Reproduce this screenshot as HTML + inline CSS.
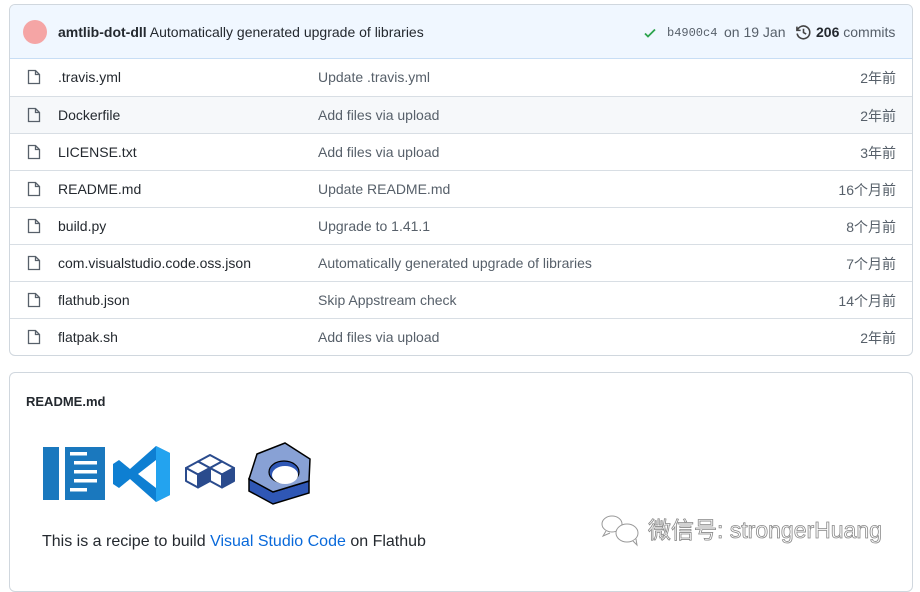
<!DOCTYPE html>
<html><head><meta charset="utf-8"><style>
*{box-sizing:border-box;margin:0;padding:0}
body{width:920px;height:572px;overflow:hidden;background:#fff;font-family:"Liberation Sans","Noto Sans CJK SC",sans-serif;font-size:14px;color:#24292f;position:relative}
span,div{line-height:17px}
.box{position:absolute;left:9px;top:4px;width:904px;border:1px solid #d0d7de;border-radius:6px;overflow:hidden}
.hd{height:54px;background:#f0f7ff;border-bottom:1px solid #c8def5;position:relative}
.av{position:absolute;left:13px;top:15px;width:24px;height:24px;border-radius:50%;background:#f5a5a5}
.hd .msg{position:absolute;left:48px;top:19px}
.row{height:37px;border-top:1px solid #d8dee4;position:relative;color:#24292f}
.hd + .row{border-top:none}
.row.g{background:#f6f8fa}
.row svg{position:absolute;left:17px;top:10px}
.row .n{position:absolute;left:48px;top:10px}
.row .c{position:absolute;left:308px;top:10px;color:#57606a}
.row .t{position:absolute;right:16px;top:11px;color:#57606a;line-height:17px}
.rd{position:absolute;left:9px;top:372px;width:904px;height:220px;border:1px solid #d0d7de;border-radius:6px}
</style></head><body>
<div class="box">
<div class="hd"><div class="av"></div>
<div class="msg"><b>amtlib-dot-dll</b> Automatically generated upgrade of libraries</div>
<svg style="position:absolute;left:633px;top:21px" width="14" height="14" viewBox="0 0 14 14"><path d="M2 7.5l3 3 7-7" fill="none" stroke="#2da44e" stroke-width="1.8"/></svg>
<span style="position:absolute;left:657px;top:20px;font-family:'Liberation Mono',monospace;font-size:12px;color:#57606a">b4900c4</span>
<span style="position:absolute;left:714px;top:19px;color:#57606a">on 19 Jan</span>
<svg style="position:absolute;left:785px;top:19px" width="17" height="17" viewBox="0 0 16 16"><path d="M1.8 2.5v3.5h3.5M2.2 6A6 6 0 1 1 2 9" fill="none" stroke="#444" stroke-width="1.5"/><path d="M8 4.5V8l2.5 1.5" fill="none" stroke="#444" stroke-width="1.5"/></svg>
<span style="position:absolute;left:806px;top:19px;color:#57606a"><b style="color:#24292f">206</b> commits</span>
</div>
<div class="row"><svg width="14" height="16" viewBox="0 0 14 16"><path d="M1.5 1.5h7l4 4v9h-11z M8.5 1.5v4h4" fill="none" stroke="#57606a" stroke-width="1.3"/></svg><span class="n">.travis.yml</span><span class="c">Update .travis.yml</span><span class="t">2年前</span></div>
<div class="row g"><svg width="14" height="16" viewBox="0 0 14 16"><path d="M1.5 1.5h7l4 4v9h-11z M8.5 1.5v4h4" fill="none" stroke="#57606a" stroke-width="1.3"/></svg><span class="n">Dockerfile</span><span class="c">Add files via upload</span><span class="t">2年前</span></div>
<div class="row"><svg width="14" height="16" viewBox="0 0 14 16"><path d="M1.5 1.5h7l4 4v9h-11z M8.5 1.5v4h4" fill="none" stroke="#57606a" stroke-width="1.3"/></svg><span class="n">LICENSE.txt</span><span class="c">Add files via upload</span><span class="t">3年前</span></div>
<div class="row"><svg width="14" height="16" viewBox="0 0 14 16"><path d="M1.5 1.5h7l4 4v9h-11z M8.5 1.5v4h4" fill="none" stroke="#57606a" stroke-width="1.3"/></svg><span class="n">README.md</span><span class="c">Update README.md</span><span class="t">16个月前</span></div>
<div class="row"><svg width="14" height="16" viewBox="0 0 14 16"><path d="M1.5 1.5h7l4 4v9h-11z M8.5 1.5v4h4" fill="none" stroke="#57606a" stroke-width="1.3"/></svg><span class="n">build.py</span><span class="c">Upgrade to 1.41.1</span><span class="t">8个月前</span></div>
<div class="row"><svg width="14" height="16" viewBox="0 0 14 16"><path d="M1.5 1.5h7l4 4v9h-11z M8.5 1.5v4h4" fill="none" stroke="#57606a" stroke-width="1.3"/></svg><span class="n">com.visualstudio.code.oss.json</span><span class="c">Automatically generated upgrade of libraries</span><span class="t">7个月前</span></div>
<div class="row"><svg width="14" height="16" viewBox="0 0 14 16"><path d="M1.5 1.5h7l4 4v9h-11z M8.5 1.5v4h4" fill="none" stroke="#57606a" stroke-width="1.3"/></svg><span class="n">flathub.json</span><span class="c">Skip Appstream check</span><span class="t">14个月前</span></div>
<div class="row"><svg width="14" height="16" viewBox="0 0 14 16"><path d="M1.5 1.5h7l4 4v9h-11z M8.5 1.5v4h4" fill="none" stroke="#57606a" stroke-width="1.3"/></svg><span class="n">flatpak.sh</span><span class="c">Add files via upload</span><span class="t">2年前</span></div>
</div>
<div class="rd">
<div style="position:absolute;left:16px;top:20px;font-size:13px;font-weight:bold">README.md</div>
<div style="position:absolute;left:32px;top:159px;font-size:16px;line-height:20px">This is a recipe to build <span style="color:#0969da;line-height:20px">Visual Studio Code</span> on Flathub</div>
</div>
<svg style="position:absolute;left:0;top:0" width="920" height="572" viewBox="0 0 920 572">
<rect x="43" y="447" width="16" height="53" fill="#1a78be"/>
<rect x="65" y="447" width="40" height="53" fill="#1a78be"/>
<g fill="#fff"><rect x="70" y="452" width="17" height="3.5"/><rect x="74" y="461" width="23" height="3.5"/><rect x="74" y="470" width="23" height="3.5"/><rect x="74" y="479" width="23" height="3.5"/><rect x="70" y="488" width="17" height="3.5"/></g>
<path d="M156 446L170 453V495L156 502L130 479L119 488L113 484V464L119 460L130 469ZM156 460L138 474L156 488Z" fill="#0e7fd2" fill-rule="evenodd"/>
<path d="M156 446L170 453V495L156 502Z" fill="#23a3ef"/>
<g stroke="#2a4b8d" stroke-width="2" stroke-linejoin="round">
<path d="M210 455l12 6.5-12 6.5-12-6.5z" fill="#fff"/>
<path d="M198 461.5l12 6.5-12 6.5-12-6.5z" fill="#fff"/>
<path d="M186 468v13l12 6.5v-13z" fill="#fff"/>
<path d="M198 474.5v13l12-6.5v-13z" fill="#2a4b8d"/>
<path d="M222 461.5l12 6.5-12 6.5-12-6.5z" fill="#fff"/>
<path d="M210 468v13l12 6.5v-13z" fill="#fff"/>
<path d="M222 474.5v13l12-6.5v-13z" fill="#2a4b8d"/>
</g>
<path d="M249 479v12l24 13 36-11v-12l-36 11z" fill="#2f57b5" stroke="#000" stroke-width="1.5"/>
<path d="M249 479l8-25 28-11 25 16-1 22-36 11z" fill="#88a1d5" stroke="#000" stroke-width="1.5"/>
<ellipse cx="284" cy="472" rx="15" ry="11" fill="#2f57b5" stroke="#000" stroke-width="1.2"/>
<ellipse cx="285" cy="475" rx="13" ry="9" fill="#fff"/>
<g fill="#fff" stroke="#999" stroke-width="1">
<ellipse cx="612" cy="524" rx="10" ry="8"/>
<ellipse cx="627" cy="533" rx="11" ry="9"/>
<path d="M606 531l-3 5 7-3M633 541l4 4-1-6"/>
</g>
</svg>
<div style="position:absolute;left:648px;top:515px;font-size:23px;line-height:30px;color:#fff;-webkit-text-stroke:0.8px #888;font-family:'Liberation Sans','Noto Sans CJK SC',sans-serif">微信号: strongerHuang</div>
</body></html>
